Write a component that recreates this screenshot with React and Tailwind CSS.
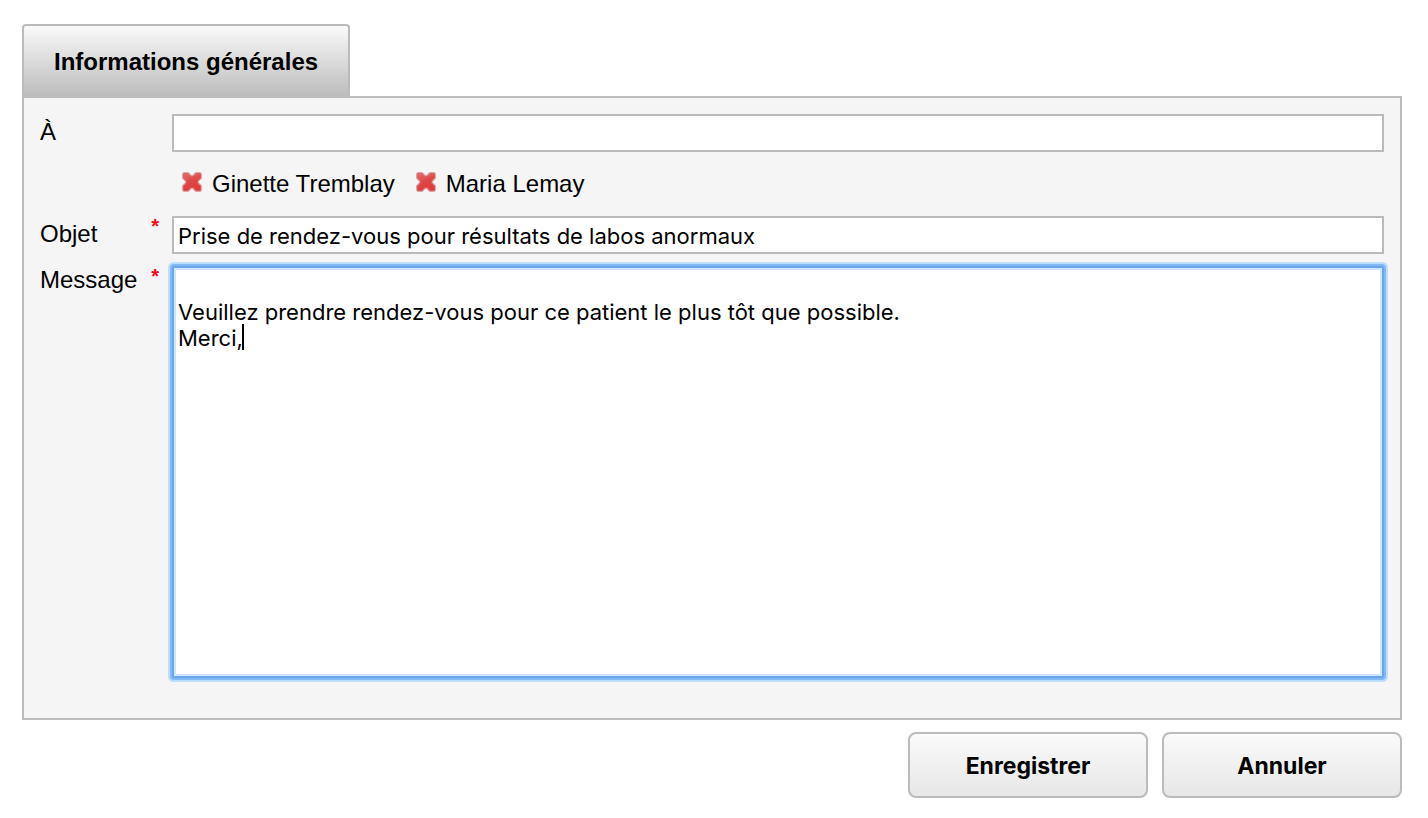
import { useState } from "react";

const RECIPIENTS = [
  { id: 1, name: "Ginette Tremblay" },
  { id: 2, name: "Maria Lemay" },
];

function RemoveIcon() {
  return (
    <svg viewBox="0 0 22 22" className="h-[22px] w-[22px]" aria-hidden="true">
      <defs>
        <linearGradient id="remove-fill" x1="0" y1="0" x2="0.3" y2="1">
          <stop offset="0" stopColor="#dc7272" />
          <stop offset="0.5" stopColor="#df4848" />
          <stop offset="1" stopColor="#e03a3a" />
        </linearGradient>
      </defs>
      <path
        d="M2 3 L3 2 H7 L10 5 H12 L15 2 H19 L20 3 V7 L17 10 V12 L20 15 V19 L19 20 H15 L12 17 H10 L7 20 H3 L2 19 V15 L5 12 V10 L2 7 Z"
        fill="url(#remove-fill)"
        stroke="#d46a6c"
        strokeOpacity="0.6"
        strokeWidth="2"
        strokeLinejoin="round"
      />
    </svg>
  );
}

function FieldLabel({ htmlFor, required, children }) {
  return (
    <label htmlFor={htmlFor} className="flex items-start justify-between pr-[13px] text-2xl">
      {children}
      {required && <span className="text-xl leading-5 font-bold text-[#ff0019]">*</span>}
    </label>
  );
}

export default function App() {
  const [recipients, setRecipients] = useState(RECIPIENTS);
  const [to, setTo] = useState("");
  const [subject, setSubject] = useState("Prise de rendez-vous pour résultats de labos anormaux");
  const [message, setMessage] = useState(
    "\nVeuillez prendre rendez-vous pour ce patient le plus tôt que possible.\nMerci,"
  );

  const removeRecipient = (id) => setRecipients((list) => list.filter((r) => r.id !== id));

  return (
    <form
      onSubmit={(e) => e.preventDefault()}
      className="bg-white pt-6 pr-[26px] pl-[22px] font-['Liberation_Sans',Arial,sans-serif] text-black"
    >
      <div role="tablist" className="flex">
        <button
          type="button"
          role="tab"
          aria-selected="true"
          className="-mb-0.5 h-[74px] rounded-t border-2 border-b-0 border-[#bbb] bg-linear-to-b from-[#fafafa] to-[#bbb] px-[30px] text-2xl font-bold"
        >
          Informations générales
        </button>
      </div>

      <div className="border-2 border-[#bbb] bg-[#f5f5f5] px-4 pt-4 pb-10">
        <div className="grid grid-cols-[132px_1fr]">
          <FieldLabel htmlFor="to">
            <span className="leading-9">À</span>
          </FieldLabel>
          <input
            id="to"
            value={to}
            onChange={(e) => setTo(e.target.value)}
            className="h-[38px] border-2 border-[#bbb] bg-white px-1 pt-0.5 font-['Inter',sans-serif] text-[22px] outline-none"
          />

          <ul className="col-start-2 flex h-16 items-center gap-5 pl-[9px] text-2xl">
            {recipients.map((r) => (
              <li key={r.id} className="flex items-center gap-[9px]">
                <button
                  type="button"
                  aria-label={`Retirer ${r.name}`}
                  onClick={() => removeRecipient(r.id)}
                  className="pb-1"
                >
                  <RemoveIcon />
                </button>
                {r.name}
              </li>
            ))}
          </ul>

          <FieldLabel htmlFor="subject" required>
            <span className="leading-9">Objet</span>
          </FieldLabel>
          <input
            id="subject"
            required
            value={subject}
            onChange={(e) => setSubject(e.target.value)}
            className="mb-3 h-[38px] border-2 border-[#bbb] bg-white px-1 pt-0.5 font-['Inter',sans-serif] text-[22px] outline-none"
          />

          <FieldLabel htmlFor="message" required>
            <span className="leading-7">Message</span>
          </FieldLabel>
          <div className="relative flex">
            <textarea
              id="message"
              required
              value={message}
              onChange={(e) => setMessage(e.target.value)}
              className="h-[412px] w-full resize-none rounded-xs border-2 border-[#6da7e9] bg-white px-1 py-[5px] font-['Inter',sans-serif] text-[22px] leading-[26px] caret-transparent shadow-[0_0_0_2px_#84b9f9,0_0_0_4px_#bfddfc,inset_0_0_0_2px_#cfe5fd] outline-none"
            />
            <span className="absolute top-[58px] left-[70px] h-[26px] w-0.5 bg-black" />
          </div>
        </div>
      </div>

      <div className="mt-3 flex justify-end gap-3.5 font-['Inter',sans-serif] text-[23px] font-bold">
        <button
          type="submit"
          className="h-[66px] w-60 rounded-lg border-2 border-[#bbb] bg-linear-to-b from-[#fafafa] to-[#e7e7e7] pt-0.5"
        >
          Enregistrer
        </button>
        <button
          type="button"
          className="h-[66px] w-60 rounded-lg border-2 border-[#bbb] bg-linear-to-b from-[#fafafa] to-[#e7e7e7] pt-0.5"
        >
          Annuler
        </button>
      </div>
    </form>
  );
}
